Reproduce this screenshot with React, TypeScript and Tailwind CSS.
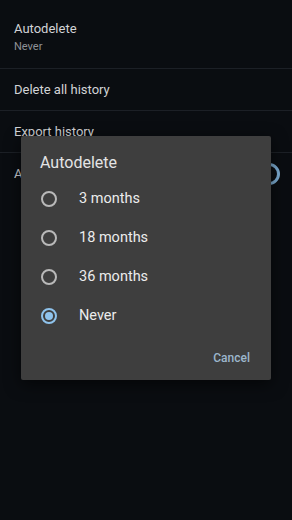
import React from 'react';

const OPTIONS = ['3 months', '18 months', '36 months', 'Never'];

function Radio({ checked }: { checked: boolean }) {
  if (checked) {
    return (
      <span className="w-[16px] h-[16px] rounded-full border-2 border-[#8fc3ec] flex items-center justify-center shrink-0">
        <span className="w-[8px] h-[8px] rounded-full bg-[#8fc3ec]" />
      </span>
    );
  }
  return <span className="w-[16px] h-[16px] rounded-full border-2 border-[#b9b9b9] shrink-0" />;
}

export default function App() {
  return (
    <div
      className="relative w-[292px] h-[520px] bg-[#0a0d11] overflow-hidden"
      style={{ fontFamily: 'Roboto, "Noto Sans", sans-serif' }}
    >
      {/* Settings list behind the dialog */}
      <div className="flex flex-col">
        <div className="pl-[14px] pt-[20px] pb-[13px]">
          <p className="text-[13px] leading-[18px] text-[#d2d3d6]">Autodelete</p>
          <p className="text-[11px] leading-[17px] text-[#8e9196]">Never</p>
        </div>
        <div className="h-px bg-[#1c2026]" />
        <div className="h-[41px] flex items-center pl-[14px] text-[13px] text-[#d2d3d6]">Delete all history</div>
        <div className="h-px bg-[#1c2026]" />
        <div className="h-[41px] flex items-center pl-[14px] text-[13px] text-[#d2d3d6]">Export history</div>
        <div className="h-px bg-[#1c2026]" />
        <div className="h-[41px] flex items-center justify-between pl-[14px] pr-[12px] text-[13px] text-[#d2d3d6]">
          {/* only the first letter shows beside the dialog */}
          <span className="w-[7px] overflow-hidden whitespace-nowrap">A</span>
          <span className="w-[22px] h-[22px] rounded-full border-[3px] border-[#7eaed4] bg-[#0a0d11]" />
        </div>
      </div>

      {/* Dialog */}
      <div className="absolute left-[21px] top-[136px] w-[250px] h-[244px] bg-[#3e3e3e] rounded-[2px] shadow-[0_4px_16px_rgba(0,0,0,0.6)] flex flex-col">
        <h2 className="pl-[19px] pt-[17px] text-[16px] leading-[20px] text-[#e4e4e4]">Autodelete</h2>
        <div className="mt-[6px] flex flex-col">
          {OPTIONS.map((o) => (
            <div key={o} className="h-[39px] flex items-center pl-[20px] gap-[22px]">
              <Radio checked={o === 'Never'} />
              <span className="text-[14.5px] text-[#ececec]">{o}</span>
            </div>
          ))}
        </div>
        <div className="flex justify-end pr-[21px] mt-[15px]">
          <span className="text-[12px] leading-[16px] font-medium text-[#9cb6cc]">Cancel</span>
        </div>
      </div>
    </div>
  );
}
